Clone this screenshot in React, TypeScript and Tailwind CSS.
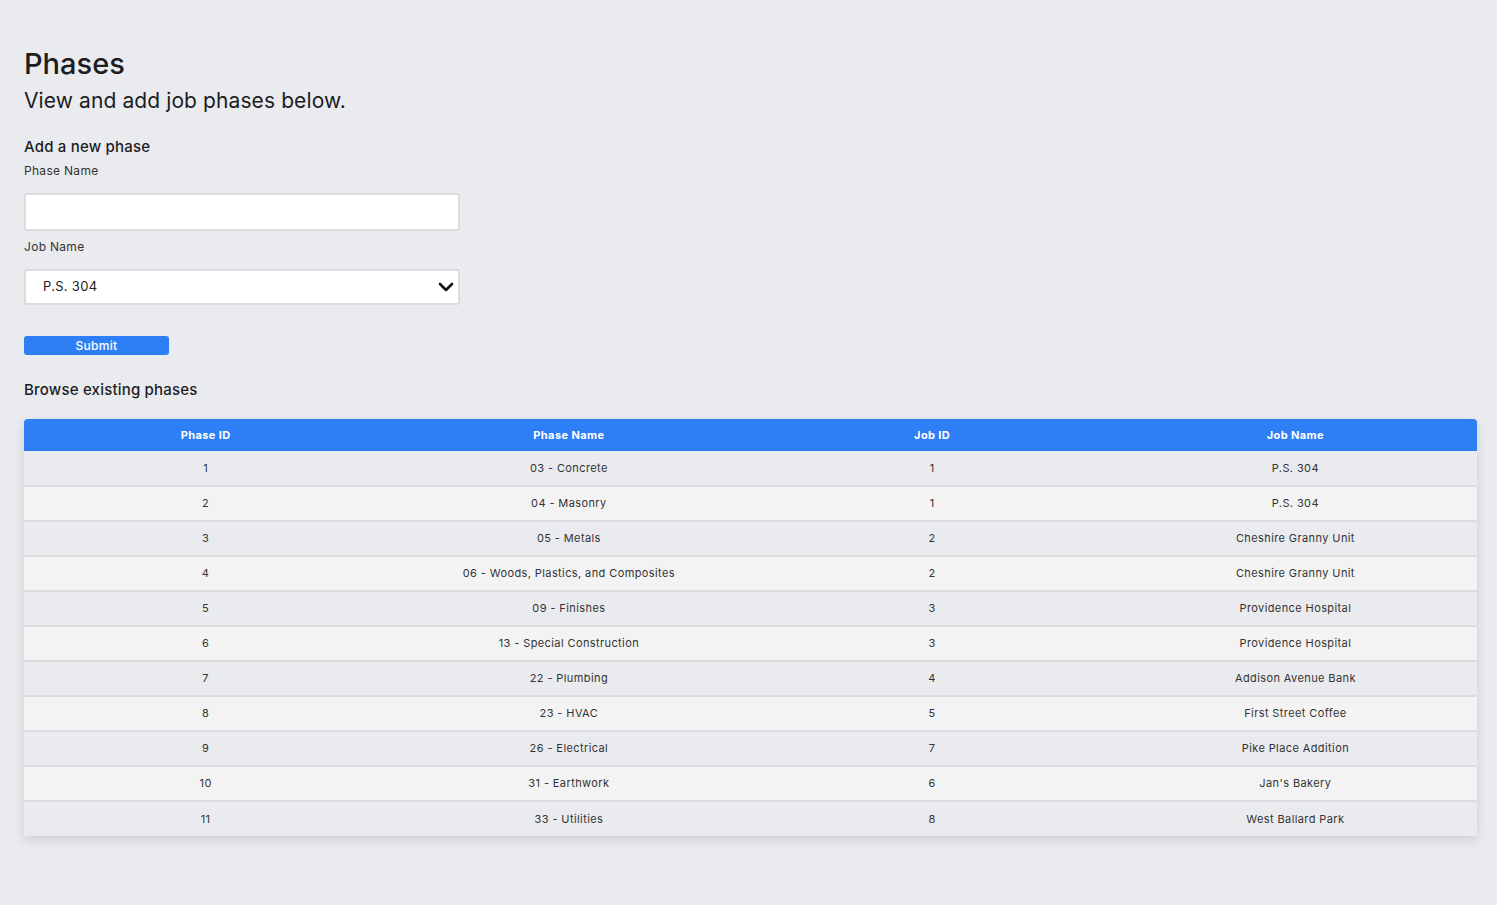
import React from 'react';

const phases = [
    { id: 1, name: '03 - Concrete', jobId: 1, job: 'P.S. 304' },
    { id: 2, name: '04 - Masonry', jobId: 1, job: 'P.S. 304' },
    { id: 3, name: '05 - Metals', jobId: 2, job: 'Cheshire Granny Unit' },
    { id: 4, name: '06 - Woods, Plastics, and Composites', jobId: 2, job: 'Cheshire Granny Unit' },
    { id: 5, name: '09 - Finishes', jobId: 3, job: 'Providence Hospital' },
    { id: 6, name: '13 - Special Construction', jobId: 3, job: 'Providence Hospital' },
    { id: 7, name: '22 - Plumbing', jobId: 4, job: 'Addison Avenue Bank' },
    { id: 8, name: '23 - HVAC', jobId: 5, job: 'First Street Coffee' },
    { id: 9, name: '26 - Electrical', jobId: 7, job: 'Pike Place Addition' },
    { id: 10, name: '31 - Earthwork', jobId: 6, job: "Jan's Bakery" },
    { id: 11, name: '33 - Utilities', jobId: 8, job: 'West Ballard Park' },
];

const ChevronDown = () => (
    <svg width="16" height="10" viewBox="0 0 16 10" fill="none" className="absolute right-[6px] top-1/2 -translate-y-1/2 pointer-events-none">
        <path d="M2 2l6 6 6-6" stroke="#111" strokeWidth="2.6" strokeLinecap="round" strokeLinejoin="round" />
    </svg>
);

const App = () => {
    return (
        <div className="bg-white w-[1502px] h-[908px]" style={{ fontFamily: 'Inter, "Noto Sans", sans-serif' }}>
            <div className="w-[1497px] h-[905px] bg-[#eaebef] px-[24px] pt-[46px] text-[#1d1d1f]">
                <h1 className="text-[29px] leading-[36px] font-medium">Phases</h1>
                <p className="mt-[5px] text-[21px] leading-[28px] font-normal tracking-[0.1px]">View and add job phases below.</p>

                {/* Add form */}
                <h2 className="mt-[20px] text-[15px] leading-[24px] font-medium tracking-[0.2px]">Add a new phase</h2>
                <label className="block mt-[4px] text-[12px] leading-[16px] text-[#333] tracking-[0.3px]">Phase Name</label>
                <input className="block mt-[14px] w-[436px] h-[38px] bg-white border-2 border-[#dcdcdf] rounded-[3px] outline-none px-3 text-[13px]" />
                <label className="block mt-[8px] text-[12px] leading-[16px] text-[#333] tracking-[0.3px]">Job Name</label>
                <div className="relative mt-[14px] w-[436px] h-[36px]">
                    <select className="appearance-none w-full h-full bg-white border-2 border-[#dcdcdf] rounded-[3px] pl-[17px] pr-8 text-[13px] text-[#222] tracking-[0.3px] outline-none">
                        <option>P.S. 304</option>
                        <option>Cheshire Granny Unit</option>
                        <option>Providence Hospital</option>
                    </select>
                    <ChevronDown />
                </div>
                <button className="block mt-[31px] w-[145px] h-[19px] bg-[#2e7ff6] rounded-[3px] text-white text-[12px] leading-[19px] font-medium tracking-[0.3px]">
                    Submit
                </button>

                {/* Table */}
                <h2 className="mt-[23px] text-[15px] leading-[24px] font-medium tracking-[0.2px]">Browse existing phases</h2>
                <div className="mt-[17px] w-[1453px] rounded-t-[4px] overflow-hidden shadow-[0_4px_12px_rgba(0,0,0,0.12)]">
                    <table className="w-full table-fixed border-collapse text-[11px] tracking-[0.4px]">
                        <thead>
                            <tr className="bg-[#2e7ff6] text-white h-[32px]">
                                <th className="font-bold">Phase ID</th>
                                <th className="font-bold">Phase Name</th>
                                <th className="font-bold">Job ID</th>
                                <th className="font-bold">Job Name</th>
                            </tr>
                        </thead>
                        <tbody className="text-[#333]">
                            {phases.map((p, i) => (
                                <tr key={p.id} className={`h-[35px] text-center ${i > 0 ? 'border-t-2 border-[#dddde0]' : ''} ${i % 2 === 0 ? 'bg-[#eaebef]' : 'bg-[#f3f3f3]'}`}>
                                    <td>{p.id}</td>
                                    <td>{p.name}</td>
                                    <td>{p.jobId}</td>
                                    <td>{p.job}</td>
                                </tr>
                            ))}
                        </tbody>
                    </table>
                </div>
            </div>
        </div>
    );
};

export default App;
